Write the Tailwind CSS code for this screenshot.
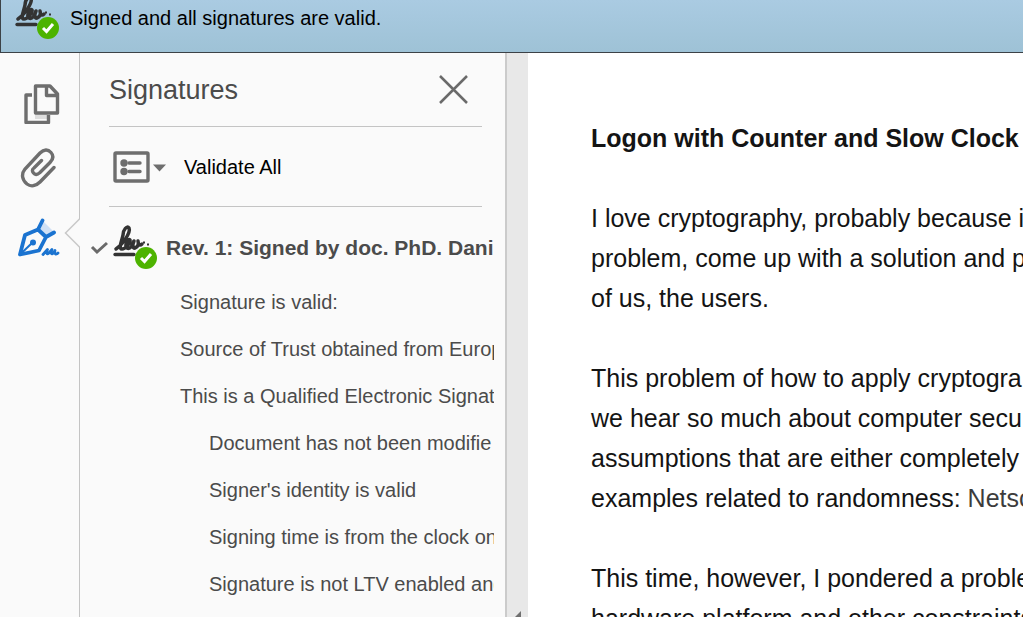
<!DOCTYPE html>
<html lang="en">
<head>
    <meta charset="UTF-8">
    <meta name="viewport" content="width=device-width, initial-scale=1.0">
    <title>Signatures</title>
    <script src="https://cdn.jsdelivr.net/npm/@tailwindcss/browser@4"></script>
</head>
<body class="flex flex-col h-screen overflow-hidden bg-white pb-[21px] pr-px font-['Liberation_Sans',Arial,sans-serif]">
    <!-- Shared icons -->
    <svg class="hidden">
        <symbol id="signed" viewBox="0 0 46 46">
            <path d="M4 25C10 21 19 9 17 4C15 1 11 6 11 11C10 16 6 25 10 25C13 25 19 19 18 16C16 14 12 22 15 24C18 26 21 21 22 17C20 21 21 25 23 24C26 23 27 20 26 17C26 21 28 22 30 20" fill="none" stroke="#333" stroke-width="3.500" stroke-linecap="round" stroke-linejoin="round"/>
            <path d="M31 18.500h2M35 20.500h2" stroke="#333" stroke-width="2"/>
            <path d="M3 30.500H22" stroke="#333" stroke-width="3.300" stroke-linecap="round"/>
            <circle cx="34" cy="34" r="11" fill="#4db300"/>
            <path d="M29 34L32.500 37.500L39 30" fill="none" stroke="#fff" stroke-width="3"/>
        </symbol>
    </svg>

    <!-- Status bar -->
    <header class="flex shrink-0 items-start gap-[10px] h-[53px] pl-[13px] overflow-hidden border-l border-b border-[#3c4247] bg-linear-to-b from-[#aacbe2] to-[#9ec2d6]">
        <svg class="size-[46px] -mt-[6px] shrink-0"><use href="#signed"/></svg>
        <p class="pt-[6px] text-[20px] leading-[24px] text-black whitespace-nowrap">Signed and all signatures are valid.</p>
    </header>

    <main class="flex flex-1 min-h-0">
        <!-- Navigation -->
        <nav class="relative flex flex-col w-20 shrink-0 bg-[#fafafa] border-r border-[#c4c4c4]">
            <button type="button" aria-label="Page thumbnails" class="mt-[27px] ml-5 size-[44px]">
                <svg viewBox="0 0 44 44" fill="none" stroke="#6e6e6e" stroke-width="3.400" stroke-linejoin="round">
                    <path d="M15 34H28V39H15Z" fill="#dedede" stroke="none"/>
                    <path d="M12 15H6V42.500H28.500V35"/>
                    <path d="M15.500 6H30L37.500 14V33H15.500ZM26.500 6V15.500H37"/>
                </svg>
            </button>
            <button type="button" aria-label="Attachments" class="mt-5 ml-[18px] size-[44px]">
                <svg viewBox="0 0 44 44" fill="none" stroke="#6e6e6e" stroke-width="3.400" stroke-linecap="round">
                    <path d="M36 23.500L22 38C18 42 13 43 9 40C4 36 3 30 7 25L22 9C26 5 30 5 33 8.500C36 12 35 15.500 32 18.500L22 28.500C19 31 17 31 15.500 29C14 27 14 25.500 16 24L23.500 16.500"/>
                </svg>
            </button>
            <button type="button" aria-label="Signatures" class="mt-[28px] ml-4 size-[44px]">
                <svg viewBox="0 0 44 44" fill="none" stroke="#1a73d0" stroke-width="3.800" stroke-linecap="round" stroke-linejoin="round">
                    <path d="M27 5L38 16L31 21L22 13Z" fill="#cfe0f5" stroke="none"/>
                    <path d="M26.500 4.500L22 13.500L30 21L38 16.500M22 13.500L9 19L4 38.500L23 34.500L30 21"/>
                    <path d="M4 38.500L16 27" stroke-width="2"/>
                    <circle cx="17" cy="26.500" r="3" fill="#1a73d0" stroke="none"/>
                    <path d="M27 38.500L31.500 33.500C30 37 31 39 33 37L36 33.500C34.500 37 35.500 39 37.500 37L39 34.500C38 38 40 39 42 37" stroke-width="2.800"/>
                </svg>
            </button>
            <svg class="absolute z-10 -right-px top-[165px] w-4 h-[30px]" viewBox="0 0 16 30" fill="none">
                <path d="M16 1L2 15L16 29Z" fill="#fafafa"/>
                <path d="M15.500 1L1.500 15L15.500 29" stroke="#c8c8c8" stroke-width="1.500"/>
            </svg>
        </nav>

        <!-- Signatures panel -->
        <section class="flex flex-col w-[427px] shrink-0 min-h-0 overflow-hidden bg-[#fafafa] border-r-2 border-[#cbcbcb]">
            <div class="flex shrink-0 items-center justify-between ml-[29px] mr-[23px] h-[74px] pr-3 border-b border-[#c4c4c4]">
                <h1 class="text-[27px] leading-8 text-[#4b4b4b]">Signatures</h1>
                <button type="button" aria-label="Close" class="size-[34px]">
                    <svg viewBox="0 0 34 34" fill="none" stroke="#6a6a6a" stroke-width="2.500">
                        <path d="M4 3L31 30M31 3L4 30"/>
                    </svg>
                </button>
            </div>
            <div class="flex shrink-0 items-center ml-[29px] mr-[23px] h-[80px] gap-[17px] border-b border-[#c4c4c4]">
                <button type="button" aria-label="Options" class="ml-1">
                    <svg class="w-[54px] h-8" viewBox="0 0 54 32" fill="none" stroke="#6e6e6e" stroke-width="3.400">
                        <rect x="2" y="2" width="33" height="28" rx="1"/>
                        <path d="M16 12H27M16 20.500H27" stroke-linecap="round"/>
                        <circle cx="11" cy="12" r="3.700" fill="#6e6e6e" stroke="none"/>
                        <circle cx="11" cy="20.500" r="3.700" fill="#6e6e6e" stroke="none"/>
                        <path d="M40 13.500H53L46.500 20.500Z" fill="#6e6e6e" stroke="none"/>
                    </svg>
                </button>
                <button type="button" class="text-[20px] leading-6 text-black">Validate All</button>
            </div>
            <div class="mr-[11px] overflow-hidden text-[20px] leading-[47px] text-[#4b4b4b] whitespace-nowrap">
                <div class="flex items-center h-[72px] pt-2 pl-[10px]">
                    <svg class="w-[22px] h-4 shrink-0" viewBox="0 0 22 16" fill="none" stroke="#6a6a6a" stroke-width="3">
                        <path d="M2 8L7 13L17 4"/>
                    </svg>
                    <svg class="size-[46px] shrink-0"><use href="#signed"/></svg>
                    <h2 class="ml-2 text-[21px] font-bold">Rev. 1: Signed by doc. PhD. Dani</h2>
                </div>
                <ul class="pl-[100px]">
                    <li>Signature is valid:</li>
                    <li>Source of Trust obtained from Europ</li>
                    <li>This is a Qualified Electronic Signat</li>
                    <li>
                        <ul class="pl-[29px]">
                            <li>Document has not been modifie</li>
                            <li>Signer's identity is valid</li>
                            <li>Signing time is from the clock on</li>
                            <li>Signature is not LTV enabled and</li>
                        </ul>
                    </li>
                </ul>
            </div>
        </section>

        <!-- Scroll gutter -->
        <div class="flex w-[21px] shrink-0 items-end justify-center overflow-hidden bg-[#e8e8e8]">
            <svg class="w-[6px] h-[6px]" viewBox="0 0 6 6"><path d="M6 0V6H0Z" fill="#707070"/></svg>
        </div>

        <!-- Document -->
        <article class="flex-1 min-w-0 overflow-hidden pl-[63px] pt-[65px] space-y-10 text-[25px] leading-10 text-[#141414] whitespace-nowrap">
            <h2 class="font-bold">Logon with Counter and Slow Clock</h2>
            <p>I love cryptography, probably because i<br>problem, come up with a solution and p<br>of us, the users.</p>
            <p>This problem of how to apply cryptogra<br>we hear so much about computer secu<br>assumptions that are either completely<br>examples related to randomness: <a href="#" class="text-[#3c3c3c]">Netsc</a></p>
            <p>This time, however, I pondered a proble<br>hardware platform and other constraints</p>
        </article>
    </main>
</body>
</html>
